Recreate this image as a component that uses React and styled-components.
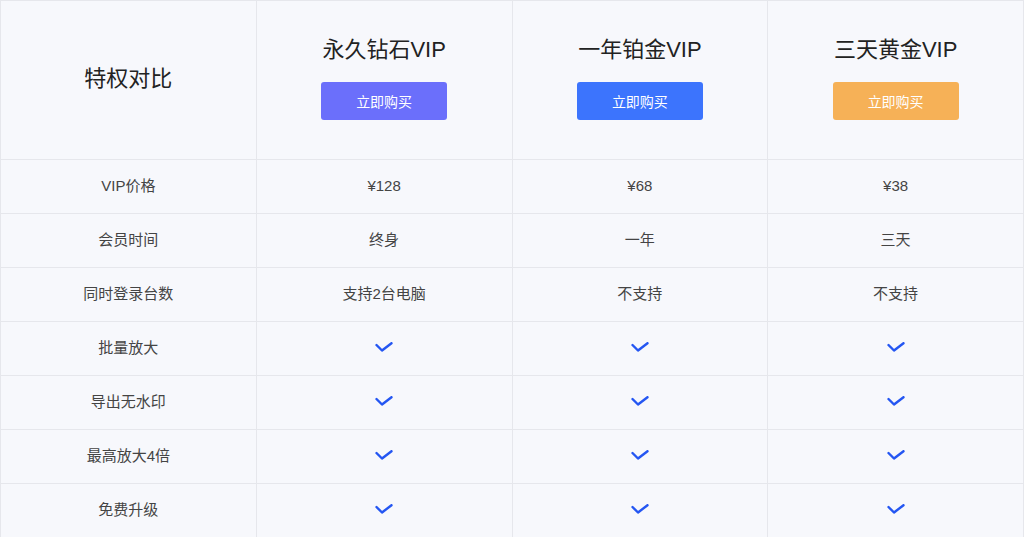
import React from "react";
import styled, { createGlobalStyle } from "styled-components";

const GlobalStyle = createGlobalStyle`
  html, body {
    margin: 0;
    padding: 0;
    background: #f7f8fc;
  }
  body {
    font-family: "Liberation Sans", "Noto Sans CJK SC", sans-serif;
  }
`;

const Table = styled.div`
  width: 1024px;
  display: grid;
  grid-template-columns: repeat(4, 1fr);
  border-top: 1px solid #e6e7ec;
  border-left: 1px solid #e6e7ec;
  background: #f7f8fc;
  box-sizing: border-box;
`;

const Cell = styled.div`
  height: ${(p) => (p.$head ? "159px" : "54px")};
  border-right: 1px solid #e6e7ec;
  border-bottom: 1px solid #e6e7ec;
  display: flex;
  align-items: center;
  justify-content: center;
  padding-bottom: ${(p) => (p.$head ? "3px" : "2px")};
  box-sizing: border-box;
  font-size: 15px;
  line-height: 20px;
  color: #444;
`;

const HeadCell = styled.div`
  height: 159px;
  border-right: 1px solid #e6e7ec;
  border-bottom: 1px solid #e6e7ec;
  display: flex;
  flex-direction: column;
  align-items: center;
  padding-top: 34px;
  box-sizing: border-box;
`;

const Corner = styled.div`
  font-size: 22px;
  line-height: 30px;
  color: #222;
`;

const PlanTitle = styled.div`
  font-size: 22px;
  line-height: 30px;
  color: #222;
  margin-bottom: 17px;
`;

const BuyButton = styled.button`
  width: 126px;
  height: 38px;
  border: none;
  border-radius: 3px;
  background: ${(p) => p.$color};
  color: #fff;
  font-family: inherit;
  font-size: 14px;
  cursor: pointer;
`;

const Check = () => (
  <svg width="18" height="11" viewBox="0 0 18 11" fill="none">
    <path d="M1.5 3 L7 8.5 L16.5 1.2" stroke="#2456f2" strokeWidth="2.4" strokeLinecap="round" strokeLinejoin="round" />
  </svg>
);

const plans = [
  { name: "永久钻石VIP", color: "#6b6ffb" },
  { name: "一年铂金VIP", color: "#3c74fd" },
  { name: "三天黄金VIP", color: "#f6b157" },
];

const rows = [
  ["VIP价格", "¥128", "¥68", "¥38"],
  ["会员时间", "终身", "一年", "三天"],
  ["同时登录台数", "支持2台电脑", "不支持", "不支持"],
  ["批量放大", true, true, true],
  ["导出无水印", true, true, true],
  ["最高放大4倍", true, true, true],
  ["免费升级", true, true, true],
];

export default function App() {
  return (
    <>
      <GlobalStyle />
      <Table>
        <Cell $head>
          <Corner>特权对比</Corner>
        </Cell>
        {plans.map((p) => (
          <HeadCell key={p.name}>
            <PlanTitle>{p.name}</PlanTitle>
            <BuyButton $color={p.color}>立即购买</BuyButton>
          </HeadCell>
        ))}
        {rows.map((r) =>
          r.map((v, i) => (
            <Cell key={r[0] + i}>{v === true ? <Check /> : v}</Cell>
          ))
        )}
      </Table>
    </>
  );
}
